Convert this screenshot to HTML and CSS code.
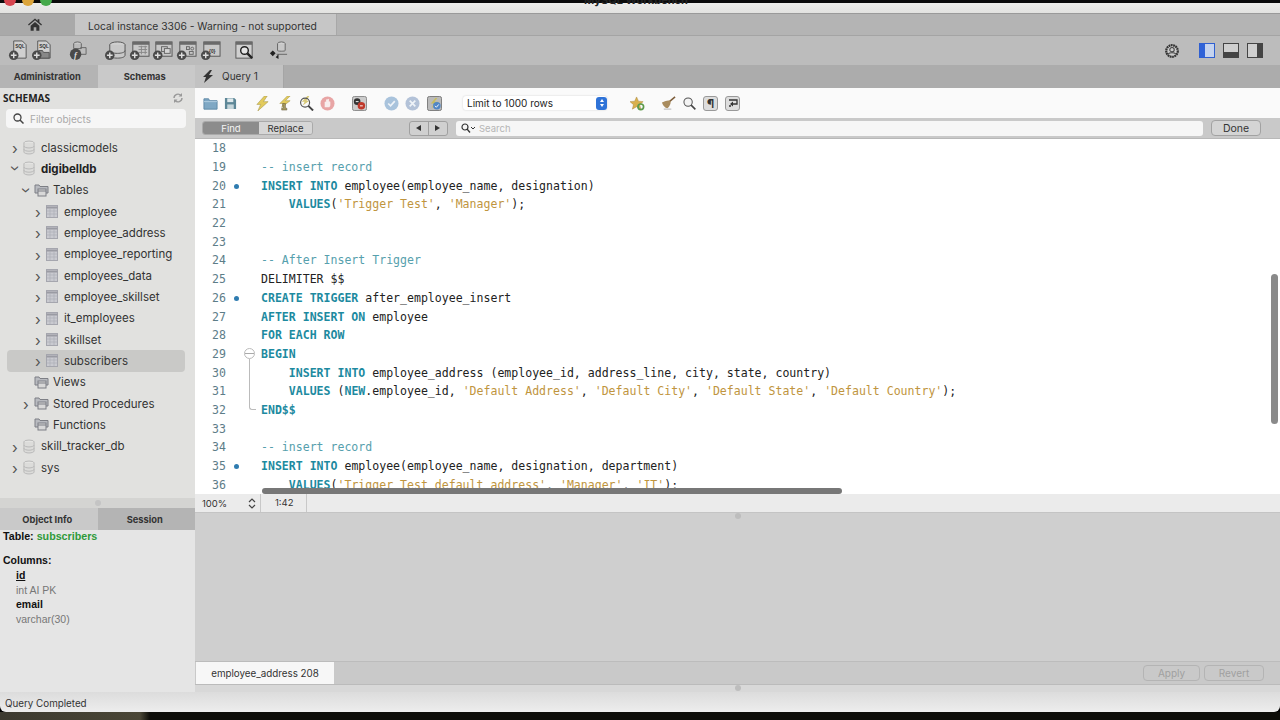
FILE: index.html
```html
<!DOCTYPE html>
<html lang="en">
<head>
    <meta charset="UTF-8">
    <title>MySQL Workbench</title>
    <link rel="stylesheet" href="styles.css">
</head>
<body>
<div class="window">
    <div class="titlebar">
        <div class="lights"><i class="red"></i><i class="orange"></i><i class="green"></i></div>
        <span class="title">MySQL Workbench</span>
    </div>

    <div class="conn-tabs">
        <div class="home-tab">
            <svg width="14" height="13" viewBox="0 0 16 14"><path d="M8 0 0 7l1 1 7-6 7 6 1-1-3-2.600V1h-2v1.600z" fill="#333"/><path d="M3 8.500 8 4l5 4.500V14H9.500v-4h-3v4H3z" fill="#333"/></svg>
        </div>
        <div class="conn-tab">Local instance 3306 - Warning - not supported</div>
    </div>

    <div class="main-toolbar">
        <svg class="ti t1" viewBox="0 0 22 22"><path d="M6 1h9l4 4v14H6z" fill="#d0d0d0" stroke="#555"/><text x="7.500" y="8" class="svg-sql">SQL</text><circle cx="6" cy="16" r="5" fill="#4a4a4a"/><path d="M3 16h6M6 13v6" stroke="#ddd" stroke-width="1.500"/></svg>
        <svg class="ti t2" viewBox="0 0 22 22"><path d="M6 1h9l4 4v14H6z" fill="#d0d0d0" stroke="#555"/><text x="7.500" y="8" class="svg-sql">SQL</text><path d="M7 11h4l1 2h6v6H7z" fill="#888" stroke="#555"/><circle cx="5" cy="16" r="5" fill="#4a4a4a"/><path d="M2 16h6M5 13v6" stroke="#ddd" stroke-width="1.500"/></svg>
        <svg class="ti t3" viewBox="0 0 22 22"><ellipse cx="11" cy="4" rx="4" ry="2" fill="#ccc" stroke="#666"/><path d="M7 4v5h8V4" fill="#bbb" stroke="#666"/><path d="M14 8h6v7h-6" fill="none" stroke="#666"/><circle cx="9" cy="15" r="6" fill="#4a4a4a"/><text x="7.300" y="18.500" class="svg-f">f</text></svg>
        <svg class="ti t4" viewBox="0 0 24 22"><ellipse cx="14" cy="5" rx="8" ry="3" fill="#d0d0d0" stroke="#555"/><path d="M6 5v11c0 2 4 3 8 3s8-1 8-3V5" fill="#c8c8c8" stroke="#555"/><path d="M6 11c0 2 4 3 8 3s8-1 8-3" fill="none" stroke="#555"/><circle cx="6" cy="16" r="5" fill="#4a4a4a"/><path d="M3 16h6M6 13v6" stroke="#ddd" stroke-width="1.500"/></svg>
        <svg class="ti t5" viewBox="0 0 22 22"><rect x="4" y="2" width="17" height="15" fill="#c8c8c8" stroke="#555"/><rect x="4" y="2" width="17" height="3" fill="#6a6a6a"/><path d="M10 7h9M10 10h9M10 13h9M13 6v9M17 6v9" stroke="#888"/><circle cx="6" cy="16" r="5" fill="#4a4a4a"/><path d="M3 16h6M6 13v6" stroke="#ddd" stroke-width="1.500"/></svg>
        <svg class="ti t6" viewBox="0 0 22 22"><rect x="4" y="2" width="17" height="15" fill="#c8c8c8" stroke="#555"/><rect x="4" y="2" width="17" height="3" fill="#6a6a6a"/><rect x="10" y="7" width="6" height="5" fill="none" stroke="#666"/><rect x="13" y="9" width="6" height="5" fill="#d5d5d5" stroke="#666"/><circle cx="6" cy="16" r="5" fill="#4a4a4a"/><path d="M3 16h6M6 13v6" stroke="#ddd" stroke-width="1.500"/></svg>
        <svg class="ti t7" viewBox="0 0 22 22"><rect x="4" y="2" width="17" height="15" fill="#c8c8c8" stroke="#555"/><rect x="4" y="2" width="17" height="3" fill="#6a6a6a"/><rect x="11" y="7" width="3" height="3" fill="none" stroke="#666"/><circle cx="17" cy="9" r="1.500" fill="none" stroke="#666"/><rect x="14" y="12" width="4" height="3" fill="none" stroke="#666"/><circle cx="6" cy="16" r="5" fill="#4a4a4a"/><path d="M3 16h6M6 13v6" stroke="#ddd" stroke-width="1.500"/></svg>
        <svg class="ti t8" viewBox="0 0 22 22"><rect x="4" y="2" width="17" height="15" fill="#c8c8c8" stroke="#555"/><rect x="4" y="2" width="17" height="3" fill="#6a6a6a"/><text x="9.500" y="14" class="svg-sql">{0}</text><circle cx="6" cy="16" r="5" fill="#4a4a4a"/><path d="M3 16h6M6 13v6" stroke="#ddd" stroke-width="1.500"/></svg>
        <svg class="ti t9" viewBox="0 0 22 22"><rect x="2" y="2" width="17" height="17" fill="#d0d0d0" stroke="#555"/><rect x="2" y="2" width="17" height="3" fill="#6a6a6a"/><circle cx="11" cy="11" r="4" fill="#e5e5e5" stroke="#222" stroke-width="1.500"/><path d="m14 14 5 5" stroke="#222" stroke-width="2.500"/></svg>
        <svg class="ti t10" viewBox="0 0 22 22"><ellipse cx="14" cy="4" rx="4" ry="2" fill="#d5d5d5" stroke="#666"/><path d="M10 4v7c0 1 8 1 8 0V4" fill="#c8c8c8" stroke="#666"/><path d="M9 15h11" stroke="#666"/><path d="m2 14 3 3 3-3-3-3zm6 4 3-3v5z" fill="#222"/></svg>
        <div class="toolbar-right">
            <svg class="gear" viewBox="0 0 18 18"><circle cx="9" cy="9" r="6.500" fill="#ccc" stroke="#333" stroke-width="2.500" stroke-dasharray="2 .6"/><circle cx="9" cy="7.500" r="2.500" fill="none" stroke="#444" stroke-width="1.200"/><path d="M4.500 12.500c2-2 7-2 9 0" fill="none" stroke="#444" stroke-width="1.200"/></svg>
            <div class="layout-btn lb-left"><i></i></div>
            <div class="layout-btn lb-bottom"><i></i></div>
            <div class="layout-btn lb-right"><i></i></div>
        </div>
    </div>

    <div class="tab-row">
        <div class="side-tabs">
            <div class="side-tab">Administration</div>
            <div class="side-tab active">Schemas</div>
        </div>
        <div class="query-tab">
            <svg width="11" height="13" viewBox="0 0 11 13"><path d="M7 0 0 7h3l-2 6 9-8H6l3-5z" fill="#333"/></svg>
            <span>Query 1</span>
        </div>
    </div>

    <div class="body">
        <aside class="sidebar">
            <div class="schemas-head">
                <b>SCHEMAS</b>
                <svg width="10" height="10" viewBox="0 0 10 10"><path d="M1 5a4 4 0 0 1 7-2.500M9 5a4 4 0 0 1-7 2.500" fill="none" stroke="#999" stroke-width="1.400"/><path d="M9 0v3.500H5.500zM1 10V6.500h3.500z" fill="#999"/></svg>
            </div>
            <div class="filter">
                <svg width="11" height="11" viewBox="0 0 11 11"><circle cx="4.500" cy="4.500" r="3.500" fill="none" stroke="#444" stroke-width="1.300"/><path d="m7 7 3.500 3.500" stroke="#444" stroke-width="1.500"/></svg>
                <span>Filter objects</span>
            </div>

            <ul class="tree">
                <li class="lvl0"><i class="arrow">›</i><svg class="db"><use href="#db"/></svg><span>classicmodels</span></li>
                <li class="lvl0"><i class="arrow open">›</i><svg class="db"><use href="#db"/></svg><span class="bold">digibelldb</span></li>
                <li class="lvl1"><i class="arrow open">›</i><svg class="grp"><use href="#grp"/></svg><span>Tables</span></li>
                <li class="lvl2"><i class="arrow">›</i><svg class="tbl"><use href="#tbl"/></svg><span>employee</span></li>
                <li class="lvl2"><i class="arrow">›</i><svg class="tbl"><use href="#tbl"/></svg><span>employee_address</span></li>
                <li class="lvl2"><i class="arrow">›</i><svg class="tbl"><use href="#tbl"/></svg><span>employee_reporting</span></li>
                <li class="lvl2"><i class="arrow">›</i><svg class="tbl"><use href="#tbl"/></svg><span>employees_data</span></li>
                <li class="lvl2"><i class="arrow">›</i><svg class="tbl"><use href="#tbl"/></svg><span>employee_skillset</span></li>
                <li class="lvl2"><i class="arrow">›</i><svg class="tbl"><use href="#tbl"/></svg><span>it_employees</span></li>
                <li class="lvl2"><i class="arrow">›</i><svg class="tbl"><use href="#tbl"/></svg><span>skillset</span></li>
                <li class="lvl2 selected"><i class="arrow">›</i><svg class="tbl"><use href="#tbl"/></svg><span>subscribers</span></li>
                <li class="lvl1"><i class="arrow none"></i><svg class="grp"><use href="#grp"/></svg><span>Views</span></li>
                <li class="lvl1"><i class="arrow">›</i><svg class="grp"><use href="#grp"/></svg><span>Stored Procedures</span></li>
                <li class="lvl1"><i class="arrow none"></i><svg class="grp"><use href="#grp"/></svg><span>Functions</span></li>
                <li class="lvl0"><i class="arrow">›</i><svg class="db"><use href="#db"/></svg><span>skill_tracker_db</span></li>
                <li class="lvl0"><i class="arrow">›</i><svg class="db"><use href="#db"/></svg><span>sys</span></li>
            </ul>

            <div class="split-grip"><i></i></div>
            <div class="info-tabs">
                <div class="side-tab active">Object Info</div>
                <div class="side-tab">Session</div>
            </div>
            <div class="info">
                <div class="info-title"><b>Table:</b> <b class="table-name">subscribers</b></div>
                <div class="info-cols"><b>Columns:</b></div>
                <div class="col-item"><b class="pk">id</b></div>
                <div class="col-item muted">int AI PK</div>
                <div class="col-item"><b>email</b></div>
                <div class="col-item muted">varchar(30)</div>
            </div>
        </aside>

        <main class="main">
            <div class="query-toolbar">
                <svg class="qi q-folder" viewBox="0 0 16 14"><path d="M1 2h5l1 2h8v9H1z" fill="#7fa8c4" stroke="#5f8aa8"/><path d="M1 5h14" stroke="#b4d0e2"/></svg>
                <svg class="qi q-save" viewBox="0 0 14 14"><path d="M1 1h10l2 2v10H1z" fill="#5d8797"/><rect x="3.500" y="1.500" width="6.500" height="4" fill="#dfe9ec"/><rect x="3.500" y="8" width="7" height="5" fill="#c5d5da"/></svg>
                <svg class="qi q-bolt" viewBox="0 0 16 16"><path d="M10 0 2 9h4l-3 7 11-10H9l4-6z" fill="#e3cb5c" stroke="#a89a4e" stroke-width=".6"/></svg>
                <svg class="qi q-bolt2" viewBox="0 0 16 16"><path d="M11 0 3 8h4l-2 4 9-7H9l5-5z" fill="#e3cb5c" stroke="#a89a4e" stroke-width=".6"/><path d="M6 8h3v5h1.500v2H5v-2h1.500V10H6z" fill="#a89a60" stroke="#57502e" stroke-width=".5"/></svg>
                <svg class="qi q-explain" viewBox="0 0 16 16"><path d="M9 0 3 6h3L4 10l7-5H8l3-5z" fill="#d8c978"/><circle cx="6.500" cy="7" r="4.800" fill="none" stroke="#555" stroke-width="1.200"/><path d="m10 10.500 5 5" stroke="#444" stroke-width="2"/></svg>
                <svg class="qi q-stop" viewBox="0 0 16 16"><circle cx="8" cy="8" r="7.500" fill="#e8a5a5"/><path d="M5 12V6.500a.8.8 0 0 1 1.500 0V4a.8.8 0 0 1 1.500 0v2V3.500a.8.8 0 0 1 1.500 0V6a.8.8 0 0 1 1.500 0v4l-1 2z" fill="#f8eeee"/></svg>
                <svg class="qi q-err" viewBox="0 0 16 16"><rect x=".5" y=".5" width="15" height="15" rx="2" fill="#ccc" stroke="#888"/><circle cx="5.500" cy="6" r="3.500" fill="#333"/><circle cx="10" cy="10.500" r="4" fill="#c0392b"/><path d="M4 6h3M8.500 10.500h3" stroke="#fff"/></svg>
                <svg class="qi q-ok" viewBox="0 0 16 16"><circle cx="8" cy="8" r="7.500" fill="#a9c3dc"/><path d="m4.500 8 2.500 2.500 4.500-5" fill="none" stroke="#eef3f8" stroke-width="1.800"/></svg>
                <svg class="qi q-x" viewBox="0 0 16 16"><circle cx="8" cy="8" r="7.500" fill="#b3c2d8"/><path d="m5 5 6 6m0-6-6 6" stroke="#eef3f8" stroke-width="1.800"/></svg>
                <svg class="qi q-auto" viewBox="0 0 16 16"><rect x=".5" y=".5" width="15" height="15" rx="2" fill="#bbb" stroke="#777"/><path d="M9 2 4 8h3l-2 5 7-7H8l3-4z" fill="#c8bd5c"/><circle cx="10.500" cy="10.500" r="4" fill="#4f86c6"/><path d="m8.500 10.500 1.500 1.500 2.500-3" fill="none" stroke="#fff"/></svg>
                <div class="limit-select">
                    <span>Limit to 1000 rows</span>
                    <div class="stepper"><i class="up"></i><i class="down"></i></div>
                </div>
                <svg class="qi q-star" viewBox="0 0 16 16"><path d="m7 1 2 4.500 5 .5-3.700 3.200L11.500 14 7 11.500 2.500 14l1.200-4.800L0 6l5-.5z" fill="#d9b04c" stroke="#a8843a" stroke-width=".5"/><circle cx="11.500" cy="11.500" r="3" fill="none" stroke="#5c9a4a" stroke-width="1.800"/></svg>
                <svg class="qi q-broom" viewBox="0 0 16 16"><path d="m15 1-6 5" stroke="#7d5d3a" stroke-width="1.600"/><path d="M10 5C7 4 3 6 1 7c1 3 3 6 6 6 2-2 4-5 3-8z" fill="#a98c5e"/><path d="M3 14h8" stroke="#c9c9c9" stroke-width="1.500"/></svg>
                <svg class="qi q-find" viewBox="0 0 14 14"><circle cx="5.500" cy="5.500" r="4.500" fill="#f4f4f4" stroke="#555" stroke-width="1.100"/><path d="m8.800 8.800 4.500 4.500" stroke="#444" stroke-width="1.700"/></svg>
                <div class="q-square q-para">¶</div>
                <div class="q-square q-wrap">
                    <svg width="10" height="10" viewBox="0 0 10 10"><path d="M1 2h8v4H3M1 8h2" fill="none" stroke="#333" stroke-width="1.300"/><path d="M5 3.500v5L2 6z" fill="#333"/></svg>
                </div>
            </div>

            <div class="find-bar">
                <div class="seg">
                    <div class="seg-find">Find</div>
                    <div class="seg-replace">Replace</div>
                </div>
                <div class="nav-btns">
                    <div class="nav-btn"><i class="tri-left"></i></div>
                    <div class="nav-btn"><i class="tri-right"></i></div>
                </div>
                <div class="search-box">
                    <svg width="15" height="10" viewBox="0 0 15 10"><circle cx="4" cy="4" r="3" fill="none" stroke="#333" stroke-width="1.200"/><path d="m6 6 3 3.500" stroke="#333" stroke-width="1.300"/><path d="m10 4 2 2 2-2" fill="none" stroke="#333"/></svg>
                    <span>Search</span>
                </div>
                <div class="done-btn">Done</div>
            </div>

            <div class="editor">
                <div class="code-line"><span class="ln">18</span></div>
                <div class="code-line"><span class="ln">19</span><code><span class="c">-- insert record</span></code></div>
                <div class="code-line"><span class="ln dot">20</span><code><span class="k">INSERT INTO</span> employee(employee_name, designation)</code></div>
                <div class="code-line"><span class="ln">21</span><code>    <span class="k">VALUES</span>(<span class="s">'Trigger Test'</span>, <span class="s">'Manager'</span>);</code></div>
                <div class="code-line"><span class="ln">22</span></div>
                <div class="code-line"><span class="ln">23</span></div>
                <div class="code-line"><span class="ln">24</span><code><span class="c">-- After Insert Trigger</span></code></div>
                <div class="code-line"><span class="ln">25</span><code>DELIMITER $$</code></div>
                <div class="code-line"><span class="ln dot">26</span><code><span class="k">CREATE TRIGGER</span> after_employee_insert</code></div>
                <div class="code-line"><span class="ln">27</span><code><span class="k">AFTER INSERT ON</span> employee</code></div>
                <div class="code-line"><span class="ln">28</span><code><span class="k">FOR EACH ROW</span></code></div>
                <div class="code-line"><span class="ln">29</span><code><span class="k">BEGIN</span></code></div>
                <div class="code-line"><span class="ln">30</span><code>    <span class="k">INSERT INTO</span> employee_address (employee_id, address_line, city, state, country)</code></div>
                <div class="code-line"><span class="ln">31</span><code>    <span class="k">VALUES</span> (<span class="k">NEW</span>.employee_id, <span class="s">'Default Address'</span>, <span class="s">'Default City'</span>, <span class="s">'Default State'</span>, <span class="s">'Default Country'</span>);</code></div>
                <div class="code-line"><span class="ln">32</span><code><span class="k">END$$</span></code></div>
                <div class="code-line"><span class="ln">33</span></div>
                <div class="code-line"><span class="ln">34</span><code><span class="c">-- insert record</span></code></div>
                <div class="code-line"><span class="ln dot">35</span><code><span class="k">INSERT INTO</span> employee(employee_name, designation, department)</code></div>
                <div class="code-line"><span class="ln">36</span><code>    <span class="k">VALUES</span>(<span class="s">'Trigger Test default address'</span>, <span class="s">'Manager'</span>, <span class="s">'IT'</span>);</code></div>

                <div class="fold"><i class="fold-circle"></i><i class="fold-line"></i></div>
                <div class="hscroll"></div>
                <div class="vscroll"></div>
            </div>

            <div class="editor-status">
                <span class="zoom">100%</span>
                <svg width="8" height="11" viewBox="0 0 8 11"><path d="m1 4 3-3 3 3M1 7l3 3 3-3" fill="none" stroke="#444" stroke-width="1.200"/></svg>
                <span class="pos">1:42</span>
            </div>

            <div class="result-area"><i class="grip-top"></i></div>

            <div class="result-tabs">
                <div class="result-tab">employee_address 208</div>
                <div class="result-actions">
                    <div class="ghost-btn">Apply</div>
                    <div class="ghost-btn">Revert</div>
                </div>
            </div>
            <div class="result-foot"><i></i></div>
        </main>
    </div>

    <div class="statusbar">Query Completed</div>
    <div class="desk-edge"></div>
</div>

<svg class="defs" width="0" height="0">
    <symbol id="db" viewBox="0 0 13 15"><ellipse cx="6.500" cy="2.500" rx="5.500" ry="2" fill="#e4e4e2" stroke="#b5b5b5"/><path d="M1 2.500v10c0 1 2.500 2 5.500 2s5.500-1 5.500-2v-10" fill="#dcdcda" stroke="#b5b5b5"/><path d="M1 6c0 1 2.500 2 5.500 2S12 7 12 6M1 9.500c0 1 2.500 2 5.500 2s5.500-1 5.500-2" fill="none" stroke="#b5b5b5"/></symbol>
    <symbol id="grp" viewBox="0 0 15 13"><path d="M1 1h4l1 1.500h8V9H1z" fill="#b9bbc0" stroke="#7d7f85"/><rect x="4" y="5" width="8" height="7" fill="#d8d8d8" stroke="#7d7f85"/><path d="M4 7h8" stroke="#7d7f85"/></symbol>
    <symbol id="tbl" viewBox="0 0 12 13"><rect x=".5" y=".5" width="11" height="12" fill="#c9cad0" stroke="#a5a6ae"/><path d="M.5 2.500h11" stroke="#9a9ba3" stroke-width="2"/><path d="M4 3v9M8 3v9M1 6h10M1 9h10" stroke="#aeafb7" stroke-width=".7"/></symbol>
</svg>
</body>
</html>
```

FILE: styles.css
```css
* {
    box-sizing: border-box;
}

html, body {
    margin: 0;
    padding: 0;
    background: #000;
}

body {
    width: 1280px;
    height: 720px;
    overflow: hidden;
    font-family: "Inter", "Liberation Sans", sans-serif;
    color: #2b2b2b;
}

.window {
    height: 720px;
    display: flex;
    flex-direction: column;
}

/* title bar */
.titlebar {
    height: 14px;
    flex: none;
    position: relative;
    overflow: hidden;
    background: linear-gradient(#0a0a0a 0, #0a0a0a 3px, #ececea 3px, #e2e2e0 13px, #9a9a9a 13px);
}

.lights {
    position: absolute;
    left: 4px;
    top: -6px;
    display: flex;
    gap: 6px;
}

.lights i {
    width: 12px;
    height: 12px;
    border-radius: 50%;
}

.red { background: #d5444e; }
.orange { background: #dba43a; }
.green { background: #45a94a; }

.title {
    position: absolute;
    left: 584px;
    top: -7px;
    font-size: 11px;
    font-weight: 700;
    color: #222;
}

/* connection tabs */
.conn-tabs {
    height: 22px;
    flex: none;
    display: flex;
    background: #b4b4b4;
    border-bottom: 1px solid #a4a4a4;
}

.home-tab {
    width: 75px;
    display: flex;
    align-items: center;
    justify-content: center;
    padding-right: 5px;
    background: #a9a9a9;
}

.conn-tab {
    width: 262px;
    padding: 2px 0 0 13px;
    display: flex;
    align-items: center;
    font-size: 10.300px;
    color: #333;
    background: #c6c6c6;
    border-right: 1px solid #a8a8a8;
}

/* main toolbar */
.main-toolbar {
    height: 29px;
    flex: none;
    display: flex;
    align-items: center;
    padding-left: 8px;
    background: #bcbcbc;
}

.ti {
    width: 21px;
    height: 21px;
    flex: none;
}

.t2 { margin-left: 3px; }
.t3 { margin-left: 14px; }
.t4 { margin-left: 16px; width: 23px; }
.t5 { margin-left: 2px; }
.t6 { margin-left: 2px; }
.t7 { margin-left: 3px; }
.t8 { margin-left: 3px; }
.t9 { margin-left: 13px; }
.t10 { margin-left: 13px; }

.svg-sql {
    font-size: 5px;
    font-weight: 700;
    fill: #333;
    font-family: "Liberation Sans", sans-serif;
}

.svg-f {
    font-size: 9px;
    font-weight: 700;
    font-style: italic;
    fill: #ddd;
    font-family: "Liberation Serif", serif;
}

.toolbar-right {
    margin-left: auto;
    padding-right: 17px;
    display: flex;
    align-items: center;
    gap: 8px;
}

.gear {
    width: 16px;
    height: 16px;
    margin-right: 11px;
}

.layout-btn {
    width: 16px;
    height: 15px;
    border: 1px solid #444;
    background: #cfcfcf;
    display: flex;
}

.layout-btn i {
    display: block;
    background: #444;
}

.lb-left { border-color: #2f5fd0; background: #c5d3ee; }
.lb-left i { width: 5px; background: #2f62d8; }
.lb-bottom { align-items: flex-end; }
.lb-bottom i { width: 100%; height: 5px; }
.lb-right { justify-content: flex-end; }
.lb-right i { width: 5px; }

/* sidebar / query tabs */
.tab-row {
    height: 23px;
    flex: none;
    display: flex;
    background: #acacac;
}

.side-tabs, .info-tabs {
    width: 195px;
    flex: none;
    display: flex;
}

.side-tab {
    width: 50%;
    display: flex;
    align-items: center;
    justify-content: center;
    padding-right: 3px;
    font-size: 9.300px;
    font-weight: 700;
    color: #333;
    background: #b4b4b4;
}

.side-tab.active {
    background: #c9c9c9;
}

.query-tab {
    width: 89px;
    display: flex;
    align-items: center;
    gap: 8px;
    padding: 0 0 1px 8px;
    font-size: 10px;
    color: #333;
    background: #c2c2c2;
    border-right: 1px solid #a5a5a5;
}

/* body */
.body {
    flex: 1;
    min-height: 0;
    display: flex;
}

.sidebar {
    width: 195px;
    flex: none;
    display: flex;
    flex-direction: column;
    background: #e1e1df;
}

.schemas-head {
    height: 21px;
    flex: none;
    display: flex;
    align-items: center;
    justify-content: space-between;
    padding: 0 12px 2px 3px;
    font-size: 10px;
    color: #222;
    font-family: "Open Sans", sans-serif;
}

.filter {
    height: 19px;
    flex: none;
    margin: 0 9px 0 6px;
    padding-left: 7px;
    display: flex;
    align-items: center;
    gap: 6px;
    background: #f6f6f6;
    border-radius: 4px;
    font-size: 10px;
    color: #aaa;
}

.tree {
    list-style: none;
    margin: 9px 0 0;
    padding: 0;
    flex: 1;
}

.tree li {
    height: 21.330px;
    display: flex;
    align-items: center;
    font-size: 11.500px;
    color: #333;
}

.lvl0 { padding-left: 11px; }
.lvl1 { padding-left: 22px; }
.lvl2 { padding-left: 34px; }

.tree li.selected {
    margin: 0 10px 0 7px;
    padding-left: 27px;
    background: #c9c9c7;
    border-radius: 4px;
}

.arrow {
    width: 8px;
    flex: none;
    font-style: normal;
    font-size: 15px;
    line-height: 15px;
    color: #555;
    text-align: center;
    margin-top: 2px;
}

.arrow.open {
    transform: rotate(90deg);
    margin-top: 0;
}

.db {
    width: 12px;
    height: 15px;
    margin: 0 6px 0 4px;
    flex: none;
}

.grp {
    width: 15px;
    height: 13px;
    margin: 0 4px 0 4px;
    flex: none;
}

.tbl {
    width: 12px;
    height: 13px;
    margin: 0 6px 0 4px;
    flex: none;
}

.bold {
    font-weight: 700;
    color: #222;
}

.split-grip {
    height: 10px;
    flex: none;
    display: flex;
    justify-content: center;
    background: #d4d4d2;
}

.split-grip i {
    width: 6px;
    height: 6px;
    margin-top: 2px;
    border-radius: 50%;
    background: #c4c4c4;
}

.info-tabs {
    height: 22px;
    flex: none;
}

.info {
    height: 162px;
    flex: none;
    font-size: 10.500px;
    font-family: "Liberation Sans", sans-serif;
    color: #111;
    padding-left: 3px;
    background: #e5e5e5;
}

.info-title {
    height: 13px;
    line-height: 13px;
    font-size: 10.700px;
}

.table-name { color: #2f9a3a; }

.info-cols {
    margin-top: 10px;
    height: 15px;
    line-height: 15px;
    font-size: 10.500px;
}

.col-item {
    height: 14.700px;
    line-height: 14.700px;
    padding-left: 13px;
}

.pk { text-decoration: underline; }
.muted { color: #777; }

/* query area */
.main {
    flex: 1;
    min-width: 0;
    display: flex;
    flex-direction: column;
    background: #cfcfcf;
}

.query-toolbar {
    height: 30px;
    flex: none;
    display: flex;
    align-items: center;
    padding-left: 8px;
    background: #fafafa;
}

.qi {
    width: 15px;
    height: 15px;
    flex: none;
}

.q-save { margin-left: 6px; width: 13px; }
.q-bolt { margin-left: 18px; }
.q-bolt2 { margin-left: 7px; }
.q-explain { margin-left: 7px; }
.q-stop { margin-left: 6px; }
.q-err { margin-left: 17px; }
.q-ok { margin-left: 17px; }
.q-x { margin-left: 6px; }
.q-auto { margin-left: 7px; }
.q-star { margin-left: 23px; }
.q-broom { margin-left: 16px; }
.q-find { margin-left: 7px; width: 13px; height: 13px; }

.limit-select {
    width: 144px;
    height: 14px;
    margin-left: 21px;
    padding-left: 4px;
    display: flex;
    align-items: center;
    justify-content: space-between;
    font-size: 10px;
    color: #222;
    background: #fff;
    border-radius: 3px;
    box-shadow: 0 0 2px #ccc;
}

.stepper {
    width: 11px;
    height: 13px;
    background: #2f73d8;
    border-radius: 3px;
    display: flex;
    flex-direction: column;
    align-items: center;
    justify-content: center;
    gap: 2px;
}

.stepper i {
    width: 0;
    height: 0;
    border-left: 2.500px solid transparent;
    border-right: 2.500px solid transparent;
}

.stepper .up { border-bottom: 3px solid #fff; }
.stepper .down { border-top: 3px solid #fff; }

.q-square {
    width: 15px;
    height: 15px;
    flex: none;
    display: flex;
    align-items: center;
    justify-content: center;
    border: 1px solid #999;
    border-radius: 3px;
    background: #ddd;
}

.q-para {
    margin-left: 7px;
    font-size: 12px;
    font-weight: 700;
    color: #333;
}

.q-wrap { margin-left: 7px; }

.find-bar {
    height: 21px;
    flex: none;
    display: flex;
    align-items: center;
    padding-left: 7px;
    background: #c9c9c9;
    border-bottom: 1px solid #b8b8b8;
}

.seg {
    width: 111px;
    height: 14px;
    display: flex;
    font-size: 9.500px;
    border: 1px solid #aaa;
    border-radius: 3px;
    overflow: hidden;
}

.seg-find {
    width: 56px;
    display: flex;
    align-items: center;
    justify-content: center;
    color: #f4f4f4;
    background: #8c8c8c;
}

.seg-replace {
    flex: 1;
    display: flex;
    align-items: center;
    justify-content: center;
    color: #333;
    background: #d6d6d6;
}

.nav-btns {
    margin-left: 96px;
    width: 39px;
    height: 15px;
    display: flex;
    border: 1px solid #a0a0a0;
    border-radius: 3px;
    background: #d0d0d0;
}

.nav-btn {
    width: 50%;
    display: flex;
    align-items: center;
    justify-content: center;
}

.nav-btn:first-child {
    border-right: 1px solid #a0a0a0;
}

.tri-left, .tri-right {
    width: 0;
    height: 0;
    border-top: 3px solid transparent;
    border-bottom: 3px solid transparent;
}

.tri-left { border-right: 5px solid #333; }
.tri-right { border-left: 5px solid #333; }

.search-box {
    margin-left: 8px;
    width: 747px;
    height: 15px;
    display: flex;
    align-items: center;
    gap: 3px;
    padding-left: 5px;
    background: #f6f6f6;
    border-radius: 3px;
    font-size: 9.500px;
    color: #b5b5b5;
}

.done-btn {
    margin-left: 8px;
    width: 50px;
    height: 16px;
    display: flex;
    align-items: center;
    justify-content: center;
    font-size: 10.500px;
    color: #333;
    background: #d4d4d4;
    border: 1px solid #a2a2a2;
    border-radius: 4px;
}

/* editor */
.editor {
    height: 355px;
    flex: none;
    position: relative;
    overflow: hidden;
    background: #fff;
}

.code-line {
    height: 18.700px;
    display: flex;
    align-items: center;
    font-family: "DejaVu Sans Mono", monospace;
    font-size: 11.550px;
    white-space: pre;
    color: #222;
}

.ln {
    width: 31px;
    flex: none;
    text-align: right;
    color: #5d7d88;
    position: relative;
}

.ln.dot::after {
    content: "";
    position: absolute;
    left: 39px;
    top: 5px;
    width: 5px;
    height: 5px;
    border-radius: 50%;
    background: #2f7cb0;
}

.code-line code {
    margin-left: 35px;
    font: inherit;
}

.k { color: #1d8aa0; font-weight: 700; }
.s { color: #c0953e; }
.c { color: #56a0ad; }

.fold {
    position: absolute;
    left: 49px;
    top: 209px;
}

.fold-circle {
    display: block;
    width: 11px;
    height: 11px;
    border: 1px solid #bbb;
    border-radius: 50%;
    background: linear-gradient(#fff 0, #fff 4px, #aaa 4px, #aaa 5px, #fff 5px);
}

.fold-line {
    display: block;
    width: 7px;
    height: 51px;
    margin-left: 5px;
    border-left: 1px solid #bbb;
    border-bottom: 1px solid #bbb;
    border-bottom-left-radius: 3px;
}

.hscroll {
    position: absolute;
    left: 67px;
    bottom: 0;
    width: 580px;
    height: 6px;
    border-radius: 3px;
    background: #777;
}

.vscroll {
    position: absolute;
    right: 2px;
    top: 135px;
    width: 7px;
    height: 150px;
    border-radius: 4px;
    background: #8a8a8a;
}

.editor-status {
    height: 18px;
    flex: none;
    display: flex;
    align-items: center;
    padding-left: 7px;
    font-size: 9.500px;
    color: #333;
    background: #ebebeb;
}

.zoom { width: 46px; }

.pos {
    margin-left: 4px;
    width: 47px;
    height: 18px;
    padding-left: 14px;
    line-height: 18px;
    border-left: 1px solid #c8c8c8;
    border-right: 1px solid #c8c8c8;
}

.result-area {
    flex: 1;
    display: flex;
    justify-content: center;
    border-top: 1px solid #c4c4c4;
}

.grip-top, .result-foot i {
    width: 6px;
    height: 6px;
    border-radius: 50%;
    background: #bdbdbd;
}

.result-tabs {
    height: 24px;
    flex: none;
    display: flex;
    background: #c9c9c9;
    border-top: 1px solid #bcbcbc;
    border-bottom: 1px solid #bbb;
}

.result-tab {
    width: 138px;
    margin-left: 1px;
    display: flex;
    align-items: center;
    justify-content: center;
    font-size: 9.800px;
    color: #333;
    background: #f7f7f7;
}

.result-actions {
    margin-left: auto;
    padding-right: 16px;
    display: flex;
    align-items: center;
    gap: 4px;
}

.ghost-btn {
    width: 57px;
    height: 16px;
    display: flex;
    align-items: center;
    justify-content: center;
    font-size: 10px;
    color: #a0a0a0;
    border: 1px solid #b4b4b4;
    border-radius: 4px;
}

.ghost-btn + .ghost-btn { width: 60px; }

.result-foot {
    height: 7px;
    flex: none;
    display: flex;
    justify-content: center;
    background: #d8d8d8;
}

.statusbar {
    height: 20px;
    flex: none;
    padding: 2px 0 0 5px;
    display: flex;
    align-items: center;
    font-size: 9.800px;
    color: #333;
    background: linear-gradient(#dcdcdc, #ededed);
    border-radius: 0 0 6px 6px;
}

.desk-edge {
    height: 8px;
    flex: none;
    background: linear-gradient(90deg, #3c3a30 0, #4a4636 140px, #0c0c08 150px, #0c0c08 100%);
}

.defs {
    position: absolute;
}
```
